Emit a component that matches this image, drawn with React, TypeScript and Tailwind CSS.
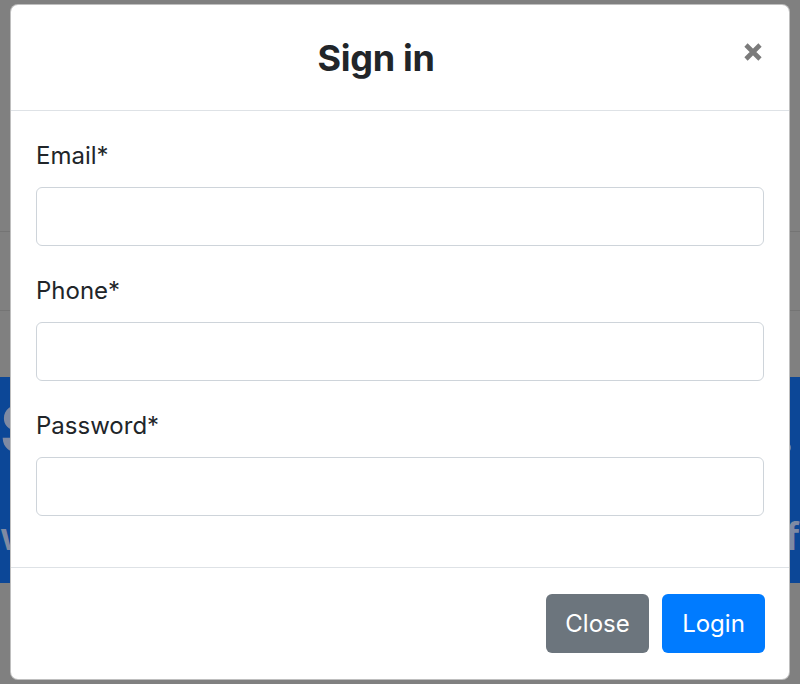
import React from "react";

export default function App() {
  const font = { fontFamily: "Inter, 'Noto Sans', 'Liberation Sans', sans-serif" };
  return (
    <div className="relative w-[800px] h-[684px] overflow-hidden bg-[#808080]" style={font}>
      {/* page underneath the backdrop */}
      <div className="flex flex-col">
        <div className="h-[232px] border-b border-[#747474]" />
        <div className="h-[79px] border-b border-[#747474]" />
        <div className="h-[66px]" />
        <div className="h-[206px] bg-[#0c4797] flex flex-col justify-between pt-[20px] pb-[28px] text-[#7f8aa3]">
          <div className="flex justify-between items-end">
            <span className="text-[64px] font-bold leading-none">Save</span>
            <span className="text-[64px] font-bold leading-none pr-[4px]">now.</span>
          </div>
          <div className="flex justify-between items-end">
            <span className="text-[38px] font-semibold leading-none">with</span>
            <span className="text-[38px] font-semibold leading-none">of</span>
          </div>
        </div>
      </div>

      {/* modal */}
      <div className="absolute left-[10px] top-[4px] w-[780px] h-[676px] bg-white border border-black/25 rounded-[8px] flex flex-col text-[#212529]">
        <div className="h-[106px] shrink-0 border-b border-[#dee2e6] flex items-center px-[26px]">
          <div className="flex-1 text-center text-[36px] font-bold leading-none tracking-[-0.3px]">Sign in</div>
          <div className="w-[48px] flex justify-end -mt-[12px]">
            <svg width="20" height="20" viewBox="0 0 20 20">
              <path d="M3 3 L17 17 M17 3 L3 17" stroke="#7b7b7b" strokeWidth="4.6" strokeLinecap="butt" />
            </svg>
          </div>
        </div>
        <div className="flex-1 px-[25px] pt-[27px]">
          {["Email*", "Phone*", "Password*"].map((l, i) => (
            <div key={l} className={i < 2 ? "mb-[27px]" : ""}>
              <label className="block text-[24px] leading-[36px] mb-[13px]">{l}</label>
              <div className="h-[59px] w-full border border-[#ced4da] rounded-[6px] bg-white" />
            </div>
          ))}
        </div>
        <div className="h-[112px] shrink-0 border-t border-[#dee2e6] flex items-center justify-end gap-[13px] px-[24px]">
          <button className="w-[103px] h-[59px] rounded-[6px] bg-[#6c757d] text-white text-[24px]">Close</button>
          <button className="w-[103px] h-[59px] rounded-[6px] bg-[#007bff] text-white text-[24px]">Login</button>
        </div>
      </div>
    </div>
  );
}
